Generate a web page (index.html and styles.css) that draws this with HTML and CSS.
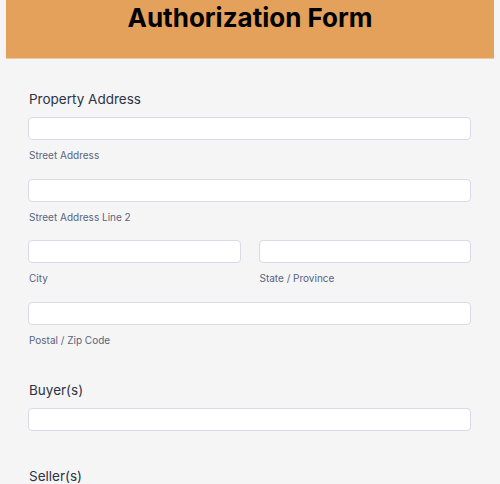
FILE: index.html
```html
<!DOCTYPE html>
<html lang="en">
<head>
	<meta charset="UTF-8">
	<title>Authorization Form</title>
	<link rel="stylesheet" href="styles.css">
</head>
<body>
	<div class="header">
		<h1>Authorization Form</h1>
	</div>
	<form class="form">
		<div class="section">
			<h2>Property Address</h2>
			<div class="field">
				<input type="text">
				<label>Street Address</label>
			</div>
			<div class="field">
				<input type="text">
				<label>Street Address Line 2</label>
			</div>
			<div class="row">
				<div class="field">
					<input type="text">
					<label>City</label>
				</div>
				<div class="field">
					<input type="text">
					<label>State / Province</label>
				</div>
			</div>
			<div class="field">
				<input type="text">
				<label>Postal / Zip Code</label>
			</div>
		</div>
		<div class="section">
			<h2>Buyer(s)</h2>
			<div class="field single">
				<input type="text">
			</div>
		</div>
		<div class="section">
			<h2>Seller(s)</h2>
			<div class="field single">
				<input type="text">
			</div>
		</div>
	</form>
</body>
</html>
```

FILE: styles.css
```css
*{
	margin: 0;
	padding: 0;
	box-sizing: border-box;
}
body{
	background: #f5f5f5;
	font-family: Inter, "Noto Sans", sans-serif;
	color: #2c3345;
}
.header{
	margin: 0 6px;
	height: 59px;
	background: #e3a15b;
	border-bottom: 1px solid #efc79c;
	text-align: center;
}
.header h1{
	font-size: 26px;
	font-weight: 700;
	color: #000;
	line-height: 32px;
	padding-top: 2px;
}
.form{
	padding: 31px 29px 0 28px;
}
.section{
	margin-bottom: 34px;
}
.section h2{
	font-size: 13.5px;
	font-weight: 400;
	line-height: 18px;
	margin-bottom: 9px;
	padding-left: 1px;
}
.field{
	margin-bottom: 16.5px;
}
.field.single{
	margin-bottom: 36px;
}
.field input{
	display: block;
	width: 100%;
	height: 23px;
	background: #fff;
	border: 1px solid #d8dae9;
	border-radius: 4px;
}
.field label{
	display: block;
	font-size: 10px;
	color: #57647e;
	line-height: 14px;
	margin-top: 8px;
	padding-left: 1px;
}
.row{
	display: grid;
	grid-template-columns: 1fr 1fr;
	gap: 18px;
}
```
